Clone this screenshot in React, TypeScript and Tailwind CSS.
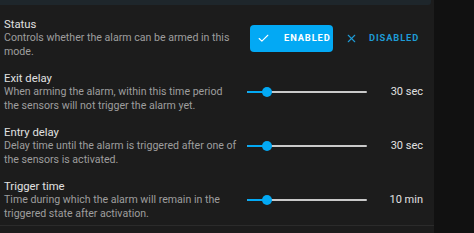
import { Check, X } from "lucide-react";

const rows = [
  {
    title: "Exit delay",
    desc: "When arming the alarm, within this time period the sensors will not trigger the alarm yet.",
    value: "30 sec",
  },
  {
    title: "Entry delay",
    desc: "Delay time until the alarm is triggered after one of the sensors is activated.",
    value: "30 sec",
  },
  {
    title: "Trigger time",
    desc: "Time during which the alarm will remain in the triggered state after activation.",
    value: "10 min",
  },
];

function Slider({ value }: { value: string }) {
  return (
    <div className="flex items-center">
      <div className="relative w-[120px] h-[10px] flex items-center">
        <div className="absolute left-0 right-0 h-[2px] bg-[#c9c9c9] rounded-full" />
        <div className="absolute left-0 w-[20px] h-[2px] bg-[#03a9f4] rounded-full" />
        <div className="absolute left-[15px] w-[10px] h-[10px] rounded-full bg-[#03a9f4]" />
      </div>
      <div className="w-[56px] text-right text-[#e1e1e1] text-[11px]">{value}</div>
    </div>
  );
}

export default function App() {
  return (
    <div className="w-[474px] h-[233px] bg-[#111111] flex overflow-hidden" style={{ fontFamily: "Roboto, sans-serif" }}>
      <div className="w-[434px] h-full bg-[#1c1c1c] flex flex-col">
        <div className="w-[431px] h-[5px] bg-[#1e262b] rounded-br-[3px]" />
        <div className="flex flex-col gap-[13.5px] pt-[13px] pl-[4px] text-[10.6px] leading-[13.5px]">
          <div className="flex items-center">
            <div className="w-[246px] pr-[13px]">
              <div className="text-[#e1e1e1] text-[11.3px]">Status</div>
              <div className="text-[#9e9e9e]">Controls whether the alarm can be armed in this mode.</div>
            </div>
            <div className="flex items-center">
              <button className="h-[27px] w-[83px] rounded-[4px] bg-[#03a9f4] flex items-center pl-[7px] gap-[14px] text-white">
                <Check size={13} strokeWidth={2} />
                <span className="text-[9.3px] font-bold tracking-[0.9px]">ENABLED</span>
              </button>
              <button className="flex items-center ml-[12px] gap-[11px] text-[#1e9bd6]">
                <X size={13} strokeWidth={2} />
                <span className="text-[9.3px] font-bold tracking-[0.9px]">DISABLED</span>
              </button>
            </div>
          </div>
          {rows.map((r) => (
            <div key={r.title} className="flex items-center">
              <div className="w-[243px] pr-[10px]">
                <div className="text-[#e1e1e1] text-[11.3px]">{r.title}</div>
                <div className="text-[#9e9e9e]">{r.desc}</div>
              </div>
              <Slider value={r.value} />
            </div>
          ))}
        </div>
        <div className="mt-[5px] h-[8px] border-t border-[#2b2b2b]" />
      </div>
    </div>
  );
}
